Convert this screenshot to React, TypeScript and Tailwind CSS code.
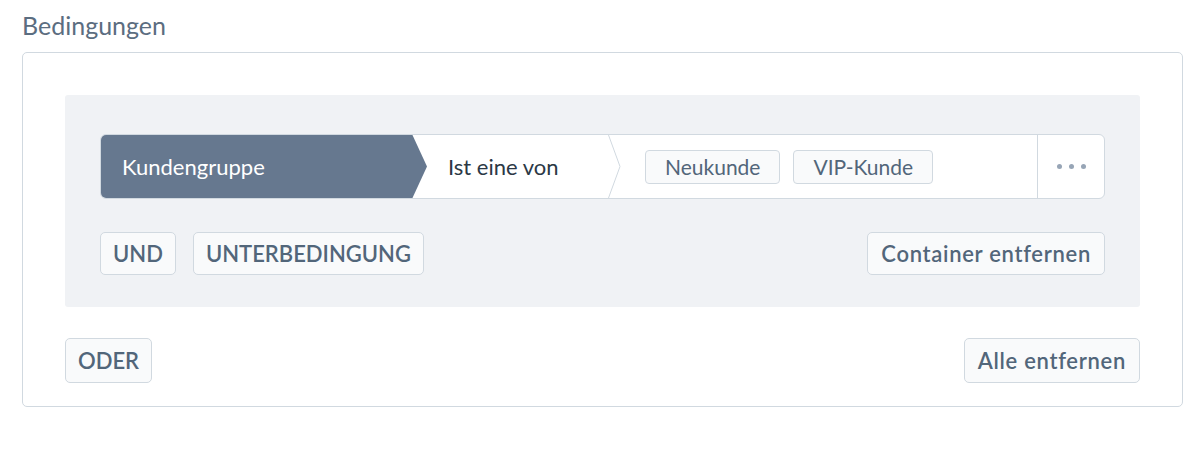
const font = { fontFamily: "Lato, 'Noto Sans', sans-serif" };

function Btn({ children, caps, tall }: { children: React.ReactNode; caps?: boolean; tall?: boolean }) {
  return (
    <button
      className={`${tall ? "h-[45px]" : "h-[43px]"} ${caps ? "px-[12px] tracking-[0px]" : "px-[13px] tracking-[0.7px]"} rounded-[5px] border border-[#d1d9e0] bg-[#f9fafb] text-[22px] font-semibold text-[#52667a] leading-none`}
    >
      {children}
    </button>
  );
}

function Tag({ label }: { label: string }) {
  return (
    <span className="h-[34px] px-[19px] flex items-center rounded-[4px] border border-[#d1d9e0] bg-[#f9fafb] text-[21px] text-[#52667a]">
      {label}
    </span>
  );
}

export default function App() {
  return (
    <div className="w-[1200px] h-[460px] bg-white" style={font}>
      <div className="pl-[22px] pr-[17px]">
        {/* Title */}
        <div className="pt-[10px] mb-[12px] text-[25px] leading-[30px] text-[#5b6d80]">Bedingungen</div>

        <div className="border border-[#d1d9e0] rounded-[5px] px-[42px] pt-[42px] pb-[23px]">
          {/* Container */}
          <div className="bg-[#f0f2f5] rounded-[3px] px-[35px] pt-[39px] pb-[32px]">
            {/* Condition row */}
            <div className="flex h-[65px] border border-[#d1d9e0] rounded-[6px] bg-white overflow-hidden">
              <div className="w-[327px] -my-px -ml-px bg-[#66788f] flex items-center pl-[22px] text-[22px] text-white [clip-path:polygon(0_0,312px_0,100%_50%,312px_100%,0_100%)] rounded-l-[6px]">
                Kundengruppe
              </div>
              <div className="w-[194px] flex items-center">
                <span className="pl-[21px] text-[22px] text-[#2b3845]">Ist eine von</span>
                <svg className="ml-auto" width="13" height="63" viewBox="0 0 13 63">
                  <path d="M0.5 0 L12 31.5 L0.5 63" fill="none" stroke="#d1d9e0" strokeWidth="1" />
                </svg>
              </div>
              <div className="flex items-center gap-[13px] pl-[24px]">
                <Tag label="Neukunde" />
                <Tag label="VIP-Kunde" />
              </div>
              <div className="ml-auto w-[67px] border-l border-[#d1d9e0] flex items-center justify-center gap-[7px]">
                <span className="w-[5px] h-[5px] rounded-full bg-[#97a5b6]" />
                <span className="w-[5px] h-[5px] rounded-full bg-[#97a5b6]" />
                <span className="w-[5px] h-[5px] rounded-full bg-[#97a5b6]" />
              </div>
            </div>

            {/* Row actions */}
            <div className="flex items-center mt-[33px] h-[43px]">
              <div className="flex gap-[17px]">
                <Btn caps>UND</Btn>
                <Btn caps>UNTERBEDINGUNG</Btn>
              </div>
              <div className="ml-auto">
                <Btn>Container entfernen</Btn>
              </div>
            </div>
          </div>

          {/* Footer actions */}
          <div className="flex items-center mt-[31px]">
            <Btn caps tall>ODER</Btn>
            <div className="ml-auto">
              <Btn tall>Alle entfernen</Btn>
            </div>
          </div>
        </div>
      </div>
    </div>
  );
}
